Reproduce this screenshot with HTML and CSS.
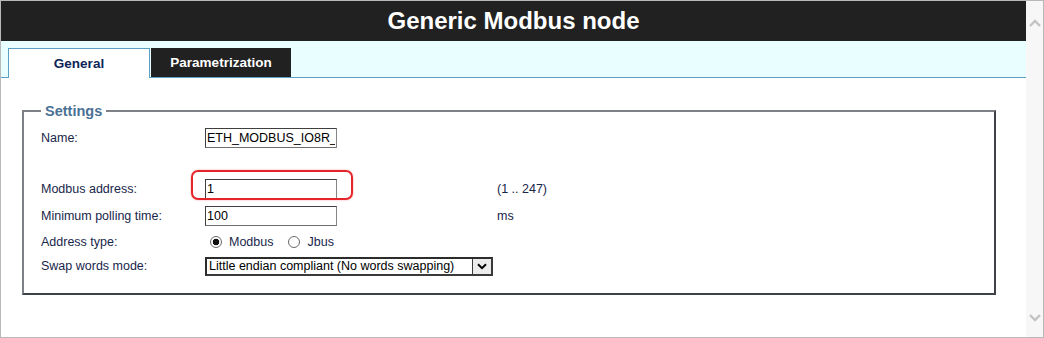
FILE: index.html
```html
<!DOCTYPE html>
<html lang="en">
<head>
<meta charset="utf-8">
<title>Generic Modbus node</title>
<link rel="stylesheet" href="styles.css">
</head>
<body>
<div class="frame">
  <div class="main">
    <header class="titlebar"><h1>Generic Modbus node</h1></header>
    <nav class="tabbar">
      <div class="tab tab-active">General</div>
      <div class="tab tab-dark">Parametrization</div>
    </nav>
    <div class="content">
      <fieldset class="settings">
        <legend>Settings</legend>
        <div class="form">
          <label class="lbl">Name:</label>
          <div class="ctl"><input class="txt" type="text" value="ETH_MODBUS_IO8R_A1"></div>
          <div class="note"></div>

          <div class="spacer"></div>

          <label class="lbl">Modbus address:</label>
          <div class="ctl"><span class="hl-wrap"><input class="txt" type="text" value="1"><span class="highlight"></span></span></div>
          <div class="note">(1 .. 247)</div>

          <label class="lbl">Minimum polling time:</label>
          <div class="ctl"><input class="txt" type="text" value="100"></div>
          <div class="note">ms</div>

          <label class="lbl">Address type:</label>
          <div class="ctl radios">
            <label class="radio"><input type="radio" name="at" checked><span>Modbus</span></label>
            <label class="radio"><input type="radio" name="at"><span>Jbus</span></label>
          </div>
          <div class="note"></div>

          <label class="lbl">Swap words mode:</label>
          <div class="ctl">
            <div class="select">
              <span class="select-value">Little endian compliant (No words swapping)</span>
              <span class="select-btn"><svg width="10" height="7" viewBox="0 0 10 7"><path d="M1 1.2 L5 5.2 L9 1.2" fill="none" stroke="#000" stroke-width="2"/></svg></span>
            </div>
          </div>
          <div class="note"></div>
        </div>
      </fieldset>
    </div>
  </div>
  <div class="scrollbar">
    <svg class="arrow" width="12" height="8" viewBox="0 0 12 8"><path d="M1 7 L6 2 L11 7" fill="none" stroke="#c3c3c3" stroke-width="2.4"/></svg>
    <svg class="arrow" width="12" height="8" viewBox="0 0 12 8"><path d="M1 1 L6 6 L11 1" fill="none" stroke="#c3c3c3" stroke-width="2.4"/></svg>
  </div>
</div>
</body>
</html>
```

FILE: styles.css
```css
html, body {
  margin: 0;
  padding: 0;
  background: #fff;
}

body {
  font-family: "Liberation Sans", Arial, sans-serif;
}

.frame {
  width: 1044px;
  height: 338px;
  box-sizing: border-box;
  border: 1px solid #b9b9b9;
  display: flex;
  overflow: hidden;
}

.main {
  width: 1025px;
  display: flex;
  flex-direction: column;
  background: #fff;
}

.titlebar {
  height: 40px;
  background: #212121;
  display: flex;
  align-items: center;
  justify-content: center;
}

.titlebar h1 {
  margin: 0;
  font-size: 24px;
  font-weight: 700;
  color: #fff;
  line-height: 28px;
}

.tabbar {
  height: 29px;
  padding: 7px 0 0 7px;
  background: #e9ffff;
  border-bottom: 1px solid #5b9fc1;
  display: flex;
  align-items: flex-start;
}

.tab {
  display: flex;
  align-items: center;
  justify-content: center;
  font-size: 13.5px;
  font-weight: 700;
  box-sizing: border-box;
}

.tab-active {
  width: 142px;
  height: 30px;
  margin-bottom: -1px;
  background: #fff;
  border: 1px solid #5b9fc1;
  border-bottom: none;
  color: #0d2458;
}

.tab-dark {
  width: 140px;
  height: 29px;
  margin-left: 1px;
  background: #212121;
  color: #fff;
  padding-bottom: 1px;
}

.content {
  flex: 1;
  padding: 25px 0 0 21px;
}

.settings {
  box-sizing: border-box;
  width: 974px;
  margin: 0;
  padding: 7px 17px 15px 17px;
  border-style: solid;
  border-width: 2px;
  border-color: #7d8186 #3e4248 #3e4248 #7d8186;
  min-inline-size: 0;
}

.settings legend {
  margin-left: 0;
  padding: 0 4px;
  font-size: 14.5px;
  line-height: 16px;
  font-weight: 700;
  color: #4a7194;
}

.form {
  display: grid;
  grid-template-columns: 164px 292px 1fr;
  grid-template-rows: 24px 26px 26px 28px 24px 24px;
  font-size: 12.5px;
  color: #18264a;
}

.spacer {
  grid-column: 1 / -1;
}

.lbl,
.ctl,
.note {
  display: flex;
  align-items: center;
}

.txt {
  box-sizing: border-box;
  width: 132px;
  height: 20px;
  margin: 0;
  padding: 0 1px;
  font-family: "Liberation Sans", Arial, sans-serif;
  font-size: 12.5px;
  color: #000;
  background: #fff;
  border: 1px solid;
  border-color: #3f3f3f #858585 #6f6f6f #3f3f3f;
  border-radius: 0;
  outline: none;
}

.hl-wrap {
  position: relative;
  display: inline-flex;
}

.highlight {
  position: absolute;
  left: -14px;
  top: -9px;
  width: 162px;
  height: 30px;
  box-sizing: border-box;
  border: 2px solid #e4262b;
  border-radius: 7px;
  box-shadow: 0 0 2px rgba(228, 38, 43, 0.45);
  pointer-events: none;
}

.radios {
  gap: 15px;
  padding-left: 5px;
}

.radio {
  display: flex;
  align-items: center;
  gap: 7px;
}

.radio input {
  appearance: none;
  -webkit-appearance: none;
  box-sizing: border-box;
  width: 12px;
  height: 12px;
  margin: 0;
  border: 1px solid #6a6a6a;
  border-radius: 50%;
  background: #fff;
}

.radio input:checked {
  background: radial-gradient(circle, #111 0 3px, #fff 3.6px);
}

.select {
  box-sizing: border-box;
  width: 288px;
  height: 19px;
  display: flex;
  align-items: stretch;
  border: 2px solid;
  border-color: #2c2c2c #3a3a3a #3a3a3a #2c2c2c;
  background: #fff;
  color: #000;
}

.select-value {
  flex: 1;
  display: flex;
  align-items: center;
  padding-left: 2px;
  font-size: 12.5px;
  white-space: nowrap;
}

.select-btn {
  width: 18px;
  display: flex;
  align-items: center;
  justify-content: center;
  background: #ececec;
  border-left: 1px solid #3a3a3a;
}

.scrollbar {
  width: 17px;
  background: #f7f7f7;
  display: flex;
  flex-direction: column;
  justify-content: space-between;
  align-items: center;
  padding: 18px 0 15px;
  box-sizing: border-box;
}

.arrow {
  display: block;
}
```
